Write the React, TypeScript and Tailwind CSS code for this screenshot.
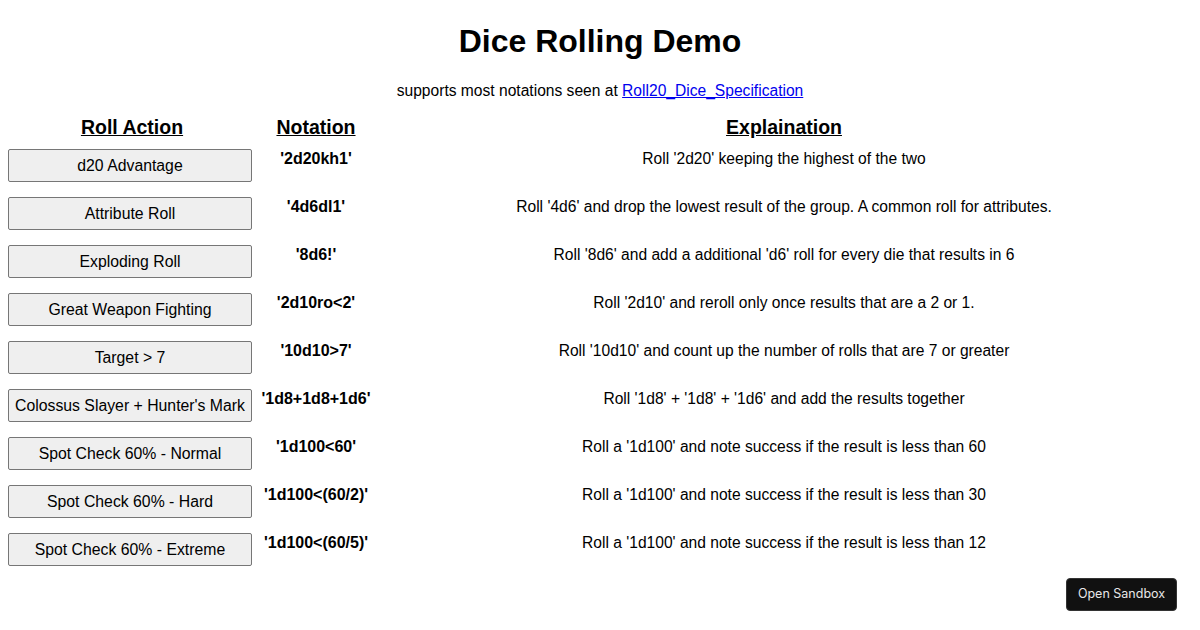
const rolls = [
  { label: 'd20 Advantage', notation: "'2d20kh1'", text: "Roll '2d20' keeping the highest of the two" },
  { label: 'Attribute Roll', notation: "'4d6dl1'", text: "Roll '4d6' and drop the lowest result of the group. A common roll for attributes." },
  { label: 'Exploding Roll', notation: "'8d6!'", text: "Roll '8d6' and add a additional 'd6' roll for every die that results in 6" },
  { label: 'Great Weapon Fighting', notation: "'2d10ro<2'", text: "Roll '2d10' and reroll only once results that are a 2 or 1." },
  { label: 'Target > 7', notation: "'10d10>7'", text: "Roll '10d10' and count up the number of rolls that are 7 or greater" },
  { label: "Colossus Slayer + Hunter's Mark", notation: "'1d8+1d8+1d6'", text: "Roll '1d8' + '1d8' + '1d6' and add the results together" },
  { label: 'Spot Check 60% - Normal', notation: "'1d100<60'", text: "Roll a '1d100' and note success if the result is less than 60" },
  { label: 'Spot Check 60% - Hard', notation: "'1d100<(60/2)'", text: "Roll a '1d100' and note success if the result is less than 30" },
  { label: 'Spot Check 60% - Extreme', notation: "'1d100<(60/5)'", text: "Roll a '1d100' and note success if the result is less than 12" },
]

export default function App() {
  return (
    <div className="relative min-h-[630px] bg-white px-2 text-black" style={{ fontFamily: '"Liberation Sans", Arial, sans-serif' }}>
      <h1 className="pt-[23px] text-center text-[32px] font-bold leading-[36px]">Dice Rolling Demo</h1>
      <p className="mt-[23px] text-center text-[15.6px] leading-[18px]">
        supports most notations seen at{' '}
        <a href="#" className="text-[#0000ee] underline">Roll20_Dice_Specification</a>
      </p>

      <div className="mt-[16px] grid grid-cols-[248px_120px_1fr]">
        <div className="text-center text-[19.5px] font-bold leading-[23px] underline">Roll Action</div>
        <div className="text-center text-[19.5px] font-bold leading-[23px] underline">Notation</div>
        <div className="text-center text-[19.5px] font-bold leading-[23px] underline">Explaination</div>
      </div>

      <div className="mt-[10px] flex flex-col">
        {rolls.map((r) => (
          <div key={r.label} className="grid h-12 grid-cols-[248px_120px_1fr] items-start">
            <button
              type="button"
              className="h-[33px] w-[244px] rounded-[2px] border border-[#767676] bg-[#efefef] text-[15.8px] leading-[18px] text-black"
            >
              {r.label}
            </button>
            <div className="pt-px text-center text-base font-bold leading-[18px]">{r.notation}</div>
            <div className="pt-px text-center text-[15.6px] leading-[18px]">{r.text}</div>
          </div>
        ))}
      </div>

      <button
        type="button"
        className="absolute bottom-[19px] right-[23px] h-[33px] w-[111px] rounded-[4px] border border-[#333] bg-[#111] text-[12.5px] text-[#e8e8e8]"
        style={{ fontFamily: 'Inter, "Noto Sans", sans-serif' }}
      >
        Open Sandbox
      </button>
    </div>
  )
}
